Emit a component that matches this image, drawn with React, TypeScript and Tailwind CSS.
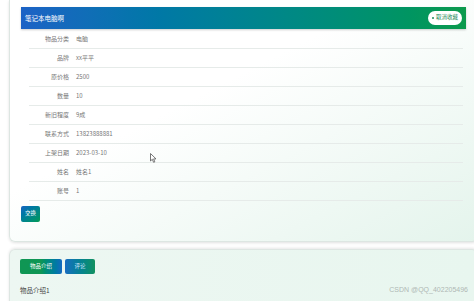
const rows = [
  { label: '物品分类', value: '电脑' },
  { label: '品牌', value: 'xx平平' },
  { label: '原价格', value: '2500' },
  { label: '数量', value: '10' },
  { label: '新旧程度', value: '9成' },
  { label: '联系方式', value: '13823888881' },
  { label: '上架日期', value: '2023-03-10' },
  { label: '姓名', value: '姓名1' },
  { label: '账号', value: '1' },
];

export default function App() {
  return (
    <div
      className="relative w-[474px] h-[301px] overflow-hidden bg-white"
      style={{ fontFamily: '"Noto Sans CJK SC", "Noto Sans", sans-serif' }}
    >
      {/* detail card */}
      <div className="ml-[9px] w-[469px] pt-[7px] pb-[19px] px-[11px] rounded-b-[6px] border border-t-0 border-[#dde6e2] shadow-[0_1px_3px_rgba(0,0,0,0.12)] bg-gradient-to-br from-white from-40% to-[#e4f4ec]">
        <div className="h-[22px] flex items-center justify-between pl-[4px] pr-[4px] bg-gradient-to-r from-[#1c62c6] to-[#0c9a4c] shadow-[0_1px_2px_rgba(0,0,0,0.2)]">
          <span className="text-[6.5px] text-white leading-none">笔记本电脑啊</span>
          <button className="h-[14px] px-[4px] flex items-center gap-[2px] rounded-full bg-white text-[5.5px] text-[#1d8a5a] leading-none">
            <span className="w-[2px] h-[2px] rounded-full bg-[#1d8a5a]" />
            取消收藏
          </button>
        </div>

        <div className="mt-[1px] ml-[8px] mr-[3px]">
          {rows.map((r) => (
            <div key={r.label} className="h-[19px] flex items-center border-b border-[#e6ebe9] text-[6px] text-[#777] leading-none">
              <span className="w-[40px] text-right">{r.label}</span>
              <span className="pl-[7px]">{r.value}</span>
            </div>
          ))}
        </div>

        <button className="mt-[5px] w-[19px] h-[16px] flex items-center justify-center rounded-[2px] bg-gradient-to-br from-[#1a62c2] to-[#0d9a52] text-[5.5px] text-white leading-none">
          交换
        </button>
      </div>

      {/* tabs card */}
      <div className="mt-[7px] ml-[9px] w-[469px] h-[60px] pt-[9px] px-[10px] rounded-t-[6px] border border-b-0 border-[#dde6e2] shadow-[0_-1px_3px_rgba(0,0,0,0.1)] bg-gradient-to-r from-[#edf7f2] to-[#e8f6ef]">
        <div className="flex gap-[3px]">
          <button className="w-[42px] h-[15px] flex items-center justify-center rounded-[2px] bg-gradient-to-r from-[#0f9654] via-[#0f9654] to-[#1668c0] text-[5.5px] text-white leading-none">
            物品介绍
          </button>
          <button className="w-[30px] h-[15px] flex items-center justify-center rounded-[2px] bg-gradient-to-r from-[#1a6cc0] to-[#14915e] text-[5.5px] text-[#cfe6ff] leading-none">
            评论
          </button>
        </div>
        <p className="mt-[13px] text-[6.5px] text-[#444] leading-none">物品介绍1</p>
      </div>

      {/* mouse pointer */}
      <svg className="absolute left-[150px] top-[153px]" width="7" height="10" viewBox="0 0 7 10">
        <path d="M0.5 0.5 L0.5 8 L2.3 6.3 L3.6 9.3 L4.8 8.8 L3.6 5.9 L6 5.9 Z" fill="white" stroke="#555" strokeWidth="0.8" strokeLinejoin="round" />
      </svg>

      {/* watermark */}
      <span
        className="absolute right-[6px] top-[286px] text-[7px] text-[#b0b8b5] leading-none"
        style={{ fontFamily: '"Liberation Sans", Arial, sans-serif' }}
      >
        CSDN @QQ_402205496
      </span>
    </div>
  );
}
